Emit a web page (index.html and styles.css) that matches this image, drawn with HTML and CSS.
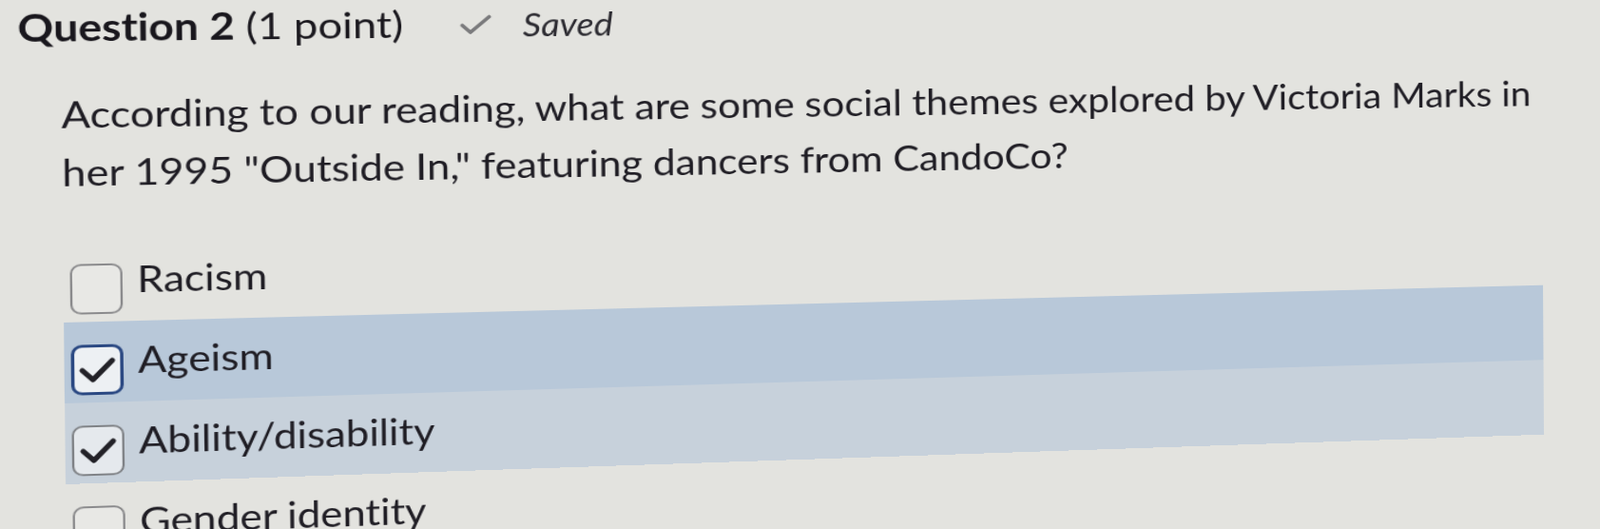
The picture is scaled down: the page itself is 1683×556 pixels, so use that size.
FILE: index.html
```
<!DOCTYPE html>
<html lang="en">
<head>
<meta charset="utf-8">
<title>Question 2</title>
<link rel="stylesheet" href="styles.css">
</head>
<body>
<main class="page">
  <header class="q-head">
    <h2 class="q-title"><strong>Question 2</strong> <span class="pts">(1 point)</span></h2>
    <span class="saved">
      <svg class="saved-icon" viewBox="0 0 30 22" aria-hidden="true"><path d="M2.5 11.5 L10 19 L27.5 2.5"/></svg>
      <em>Saved</em>
    </span>
  </header>
  <p class="q-text">According to our reading, what are some social themes explored by Victoria Marks in her 1995 "Outside In," featuring dancers from CandoCo?</p>
  <ul class="options">
    <li class="opt">
      <span class="box"></span>
      <span class="label">Racism</span>
    </li>
    <li class="opt opt-checked opt-hover">
      <span class="box box-focus"><svg class="tick" viewBox="0 0 47 53" aria-hidden="true"><path d="M10 27 L19.5 37 L37 17"/></svg></span>
      <span class="label">Ageism</span>
    </li>
    <li class="opt opt-checked">
      <span class="box"><svg class="tick" viewBox="0 0 47 53" aria-hidden="true"><path d="M10 27 L19.5 37 L37 17"/></svg></span>
      <span class="label">Ability/disability</span>
    </li>
    <li class="opt">
      <span class="box"></span>
      <span class="label">Gender identity</span>
    </li>
  </ul>
</main>
</body>
</html>
```
FILE: styles.css
```
html, body {
  margin: 0;
  padding: 0;
}
html {
  background: #e3e3df;
}
body {
  color: #1f1d24;
  font-family: Lato, "Open Sans", sans-serif;
  font-variant-ligatures: none;
  width: 1683px;
  height: 556px;
  overflow: hidden;
}
/* the reference is a photo of a screen taken at a slight angle:
   one projective transform maps the flat page onto it */
.page {
  box-sizing: border-box;
  width: 1600px;
  padding-left: 60px;
  transform-origin: 0 0;
  transform: matrix3d(1.18396, -0.010105, 0, 0.00005812,
                      0.012004, 1.001753, 0, 0.00000347,
                      0, 0, 1, 0,
                      -8.058, 0.0153, 0, 0.99535);
}
.q-head {
  display: flex;
  align-items: baseline;
  margin-left: -38px;
  padding-top: 5px;
  height: 48px;
}
.q-title {
  margin: 0;
  font-size: 39.5px;
  line-height: 48px;
  font-weight: 400;
  color: #19171d;
}
.q-title strong {
  font-weight: 700;
}
.saved {
  display: flex;
  align-items: baseline;
  margin-left: 52px;
  color: #2b2a30;
  font-size: 34px;
}
.saved-icon {
  align-self: center;
  width: 30px;
  height: 22px;
  margin-right: 29px;
  fill: none;
  stroke: #7a7a7c;
  stroke-width: 3.6;
  stroke-linecap: round;
  stroke-linejoin: round;
}
.q-text {
  width: 1430px;
  margin: 37px 0 0;
  font-size: 38.4px;
  line-height: 61px;
}
.options {
  width: 1428px;
  list-style: none;
  margin: 42px 0 0;
  padding: 0;
}
.opt {
  box-sizing: border-box;
  display: flex;
  align-items: center;
  height: 85px;
  padding: 0 0 5px 6px;
}
.opt-checked {
  background: #c7d1db;
}
.opt-hover {
  background: #b8c8d9;
}
.box {
  box-sizing: border-box;
  flex: none;
  width: 47px;
  height: 53px;
  margin-top: 21px;
  border: 2px solid #8a8a8c;
  border-radius: 10px;
  background: #e8e8e5;
  display: flex;
  align-items: center;
  justify-content: center;
}
.opt-checked .box {
  background: #e5e9ed;
  border-color: #7f8286;
}
.box-focus,
.opt-checked .box-focus {
  border: 3px solid #2a4882;
  background: #edf0f3;
}
.tick {
  width: 47px;
  height: 53px;
  flex: none;
  fill: none;
  stroke: #222127;
  stroke-width: 5;
  stroke-linecap: round;
  stroke-linejoin: round;
}
.label {
  margin-left: 13px;
  font-size: 38.2px;
  line-height: 46px;
}
```
